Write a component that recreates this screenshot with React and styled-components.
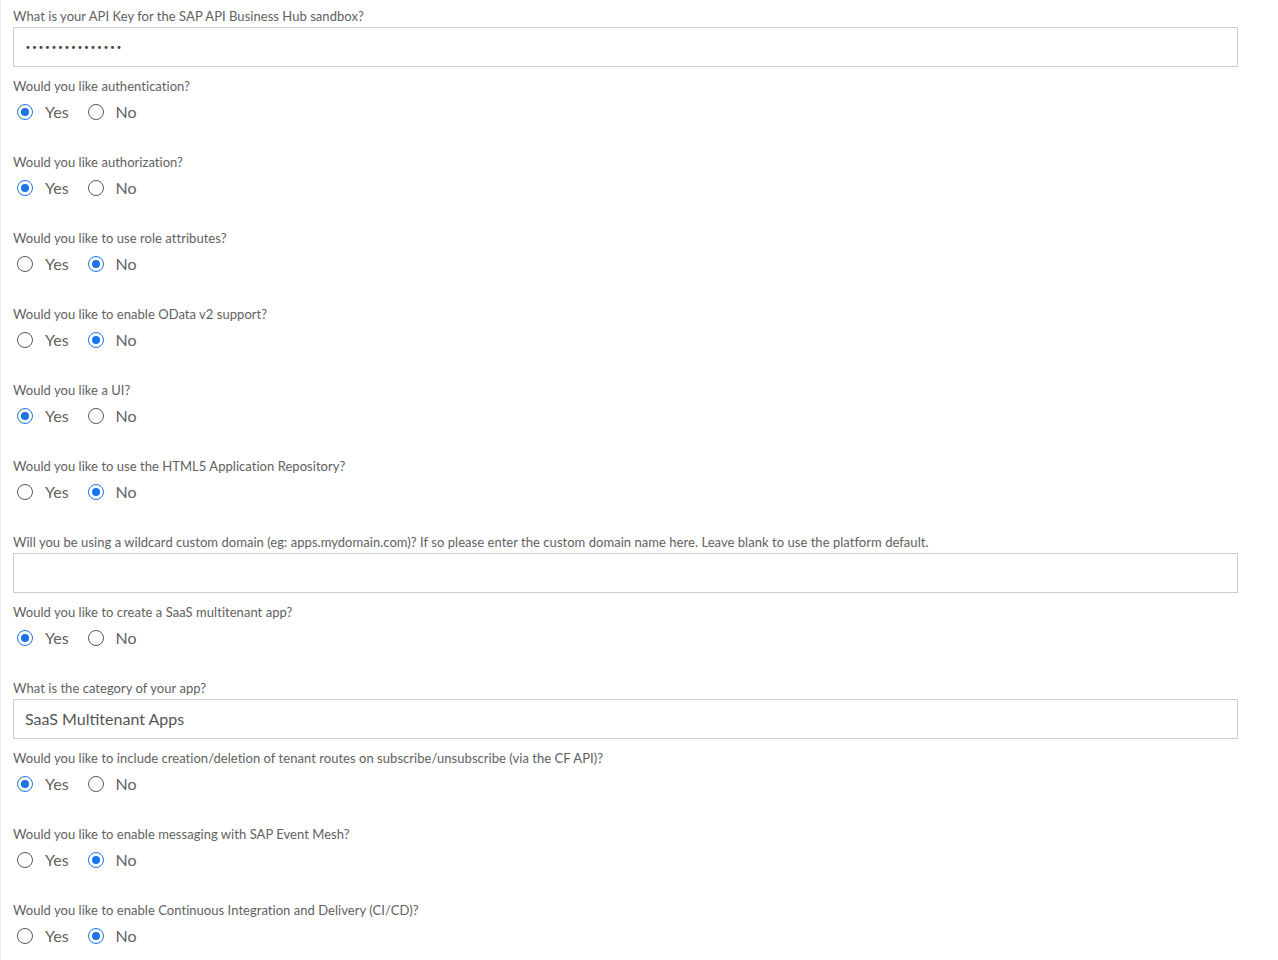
import React, { useState } from 'react'
import styled, { createGlobalStyle } from 'styled-components'

const GlobalStyle = createGlobalStyle`
  html, body {
    margin: 0;
    padding: 0;
    background: #ffffff;
  }
  body {
    font-family: Lato, "Open Sans", sans-serif;
  }
`

const questions = [
  { id: 'apiKey', label: 'What is your API Key for the SAP API Business Hub sandbox?', type: 'password', value: '•••••••••••••••' },
  { id: 'authn', label: 'Would you like authentication?', type: 'radio', value: 'yes' },
  { id: 'authz', label: 'Would you like authorization?', type: 'radio', value: 'yes' },
  { id: 'roleAttr', label: 'Would you like to use role attributes?', type: 'radio', value: 'no' },
  { id: 'odata', label: 'Would you like to enable OData v2 support?', type: 'radio', value: 'no' },
  { id: 'ui', label: 'Would you like a UI?', type: 'radio', value: 'yes' },
  { id: 'html5', label: 'Would you like to use the HTML5 Application Repository?', type: 'radio', value: 'no' },
  { id: 'domain', label: 'Will you be using a wildcard custom domain (eg: apps.mydomain.com)? If so please enter the custom domain name here. Leave blank to use the platform default.', type: 'text', value: '' },
  { id: 'saas', label: 'Would you like to create a SaaS multitenant app?', type: 'radio', value: 'yes' },
  { id: 'category', label: 'What is the category of your app?', type: 'text', value: 'SaaS Multitenant Apps' },
  { id: 'routes', label: 'Would you like to include creation/deletion of tenant routes on subscribe/unsubscribe (via the CF API)?', type: 'radio', value: 'yes' },
  { id: 'em', label: 'Would you like to enable messaging with SAP Event Mesh?', type: 'radio', value: 'no' },
  { id: 'cicd', label: 'Would you like to enable Continuous Integration and Delivery (CI/CD)?', type: 'radio', value: 'no' },
]

function RadioGroup({ value, onChange }) {
  return (
    <RadioRow>
      {['yes', 'no'].map(opt => (
        <RadioOption key={opt} onClick={() => onChange(opt)}>
          <RadioCircle checked={value === opt} />
          <RadioText>{opt === 'yes' ? 'Yes' : 'No'}</RadioText>
        </RadioOption>
      ))}
    </RadioRow>
  )
}

export default function App() {
  const [answers, setAnswers] = useState(
    Object.fromEntries(questions.map(q => [q.id, q.value]))
  )

  const set = (id, v) => setAnswers(a => ({ ...a, [id]: v }))

  return (
    <>
      <GlobalStyle />
      <Page>
        <Form>
          {questions.map(q => (
            <Field key={q.id} radio={q.type === 'radio'}>
              <Label>{q.label}</Label>
              {q.type === 'radio' ? (
                <RadioGroup value={answers[q.id]} onChange={v => set(q.id, v)} />
              ) : (
                <TextInput
                  type="text"
                  masked={q.type === 'password'}
                  value={answers[q.id]}
                  onChange={e => set(q.id, e.target.value)}
                />
              )}
            </Field>
          ))}
        </Form>
      </Page>
    </>
  )
}

const Page = styled.div`
  min-height: 960px;
  border-left: 1px solid #f0f0f0;
  box-sizing: border-box;
`

const Form = styled.div`
  width: 1225px;
  padding: 7px 0 0 12px;
  display: flex;
  flex-direction: column;
`

const Field = styled.div`
  display: flex;
  flex-direction: column;
  gap: ${props => props.radio ? '5px' : '2px'};
  margin-bottom: ${props => props.radio ? '29px' : '10px'};
`

const Label = styled.div`
  font-size: 13px;
  line-height: 18px;
  color: #616161;
  white-space: nowrap;
  letter-spacing: 0.04px;
`

const TextInput = styled.input`
  box-sizing: border-box;
  width: 100%;
  height: 40px;
  border: 1px solid #cecece;
  border-radius: 0;
  padding: 0 11px;
  font-family: ${props => props.masked ? '"DejaVu Sans", sans-serif' : 'Lato, "Open Sans", sans-serif'};
  font-size: ${props => props.masked ? '10px' : '16px'};
  letter-spacing: ${props => props.masked ? '0.6px' : 'normal'};
  line-height: 38px;
  padding-bottom: ${props => props.masked ? '0' : '2px'};
  color: ${props => props.masked ? '#444' : '#555'};
  background: #fff;
  outline: none;
`

const RadioRow = styled.div`
  display: flex;
  align-items: center;
  height: 24px;
  padding-left: 4px;
  gap: 19px;
`

const RadioOption = styled.label`
  display: flex;
  align-items: center;
  gap: 12px;
  cursor: pointer;
`

const RadioCircle = styled.span`
  box-sizing: border-box;
  width: 16px;
  height: 16px;
  border-radius: 50%;
  border: 1.5px solid ${props => props.checked ? '#1a73e8' : '#5a5a5a'};
  display: flex;
  align-items: center;
  justify-content: center;

  &::after {
    content: '';
    width: 8px;
    height: 8px;
    border-radius: 50%;
    background: ${props => props.checked ? '#1a73e8' : 'transparent'};
  }
`

const RadioText = styled.span`
  font-size: 16px;
  line-height: 18px;
  color: #616161;
  padding-bottom: 1px;
`
